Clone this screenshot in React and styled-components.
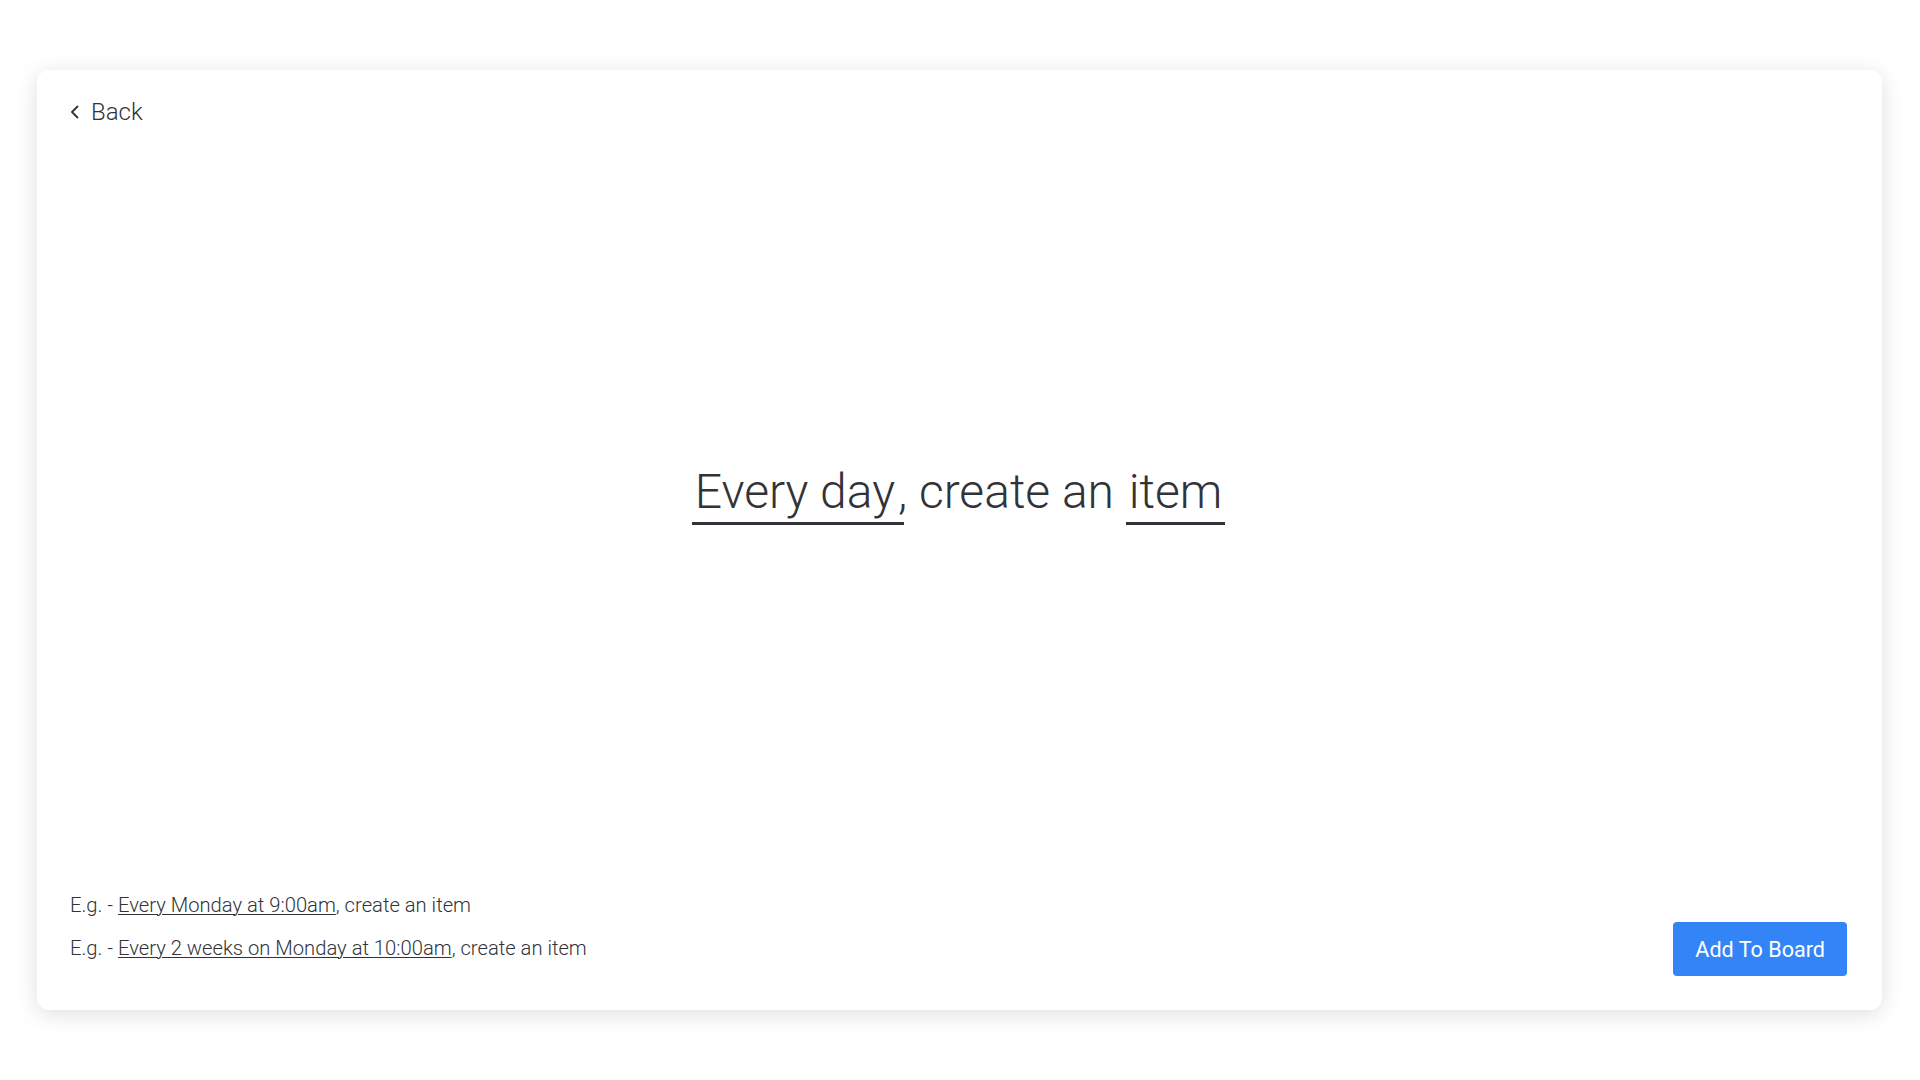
import React from "react";
import styled, { createGlobalStyle } from "styled-components";

const GlobalStyle = createGlobalStyle`
  html, body {
    margin: 0;
    padding: 0;
    background: #ffffff;
  }
  * {
    box-sizing: border-box;
  }
  body {
    font-family: Roboto, "Noto Sans", "Liberation Sans", sans-serif;
    color: #323338;
  }
`;

const Page = styled.div`
  width: 100%;
  height: 100vh;
  padding: 70px 38px 70px 37px;
  display: flex;
`;

const Card = styled.div`
  flex: 1;
  background: #fff;
  border-radius: 12px;
  box-shadow: 0 4px 22px rgba(0, 0, 0, 0.13);
  padding: 28px 35px 34px 33px;
  display: flex;
  flex-direction: column;
`;

const BackButton = styled.button`
  align-self: flex-start;
  display: flex;
  align-items: center;
  gap: 11px;
  background: none;
  border: none;
  padding: 0;
  font-family: inherit;
  font-size: 24px;
  font-weight: 300;
  line-height: 28px;
  color: #323338;
  cursor: pointer;
`;

const Main = styled.div`
  flex: 1;
  display: flex;
  align-items: center;
  justify-content: center;
  padding-bottom: 30px;
`;

const Sentence = styled.h1`
  margin: 0;
  font-size: 48px;
  font-weight: 300;
  line-height: 56px;
  color: #323338;
  letter-spacing: 0;
`;

// the underline of the first part runs a little under the comma
const Editable = styled.span`
  display: inline-block;
  line-height: 1.17;
  padding: 0 ${(p) => (p.$tail ? "9px" : "3px")} 2px 3px;
  margin-right: ${(p) => (p.$tail ? "-6px" : "0")};
  border-bottom: 3px solid #323338;
  cursor: pointer;
`;

const Footer = styled.div`
  display: flex;
  align-items: flex-end;
  justify-content: space-between;
`;

const Examples = styled.div`
  display: flex;
  flex-direction: column;
  gap: 19px;
  padding-bottom: 16px;
`;

const Example = styled.div`
  font-size: 20.2px;
  font-weight: 300;
  line-height: 24px;
  color: #323338;
`;

const ExampleLink = styled.span`
  text-decoration: underline;
  text-underline-offset: 2px;
  text-decoration-thickness: 1px;
  cursor: pointer;
`;

const PrimaryButton = styled.button`
  height: 54px;
  padding: 0 22px;
  border: none;
  border-radius: 4px;
  background: #3385f7;
  color: #fff;
  font-family: inherit;
  font-size: 21.6px;
  font-weight: 400;
  cursor: pointer;
`;

const ChevronLeft = () => (
  <svg width="10" height="14" viewBox="0 0 10 14" fill="none">
    <path d="M7.5 1.5 L2 7 L7.5 12.5" stroke="#323338" strokeWidth="1.8" strokeLinecap="round" strokeLinejoin="round" />
  </svg>
);

const examples = [
  "Every Monday at 9:00am",
  "Every 2 weeks on Monday at 10:00am",
];

export default function App() {
  return (
    <>
      <GlobalStyle />
      <Page>
        <Card>
          <BackButton>
            <ChevronLeft />
            Back
          </BackButton>

          <Main>
            <Sentence>
              <Editable $tail>Every day</Editable>, create an <Editable>item</Editable>
            </Sentence>
          </Main>

          <Footer>
            <Examples>
              {examples.map((text) => (
                <Example key={text}>
                  E.g. - <ExampleLink>{text}</ExampleLink>, create an item
                </Example>
              ))}
            </Examples>
            <PrimaryButton>Add To Board</PrimaryButton>
          </Footer>
        </Card>
      </Page>
    </>
  );
}
